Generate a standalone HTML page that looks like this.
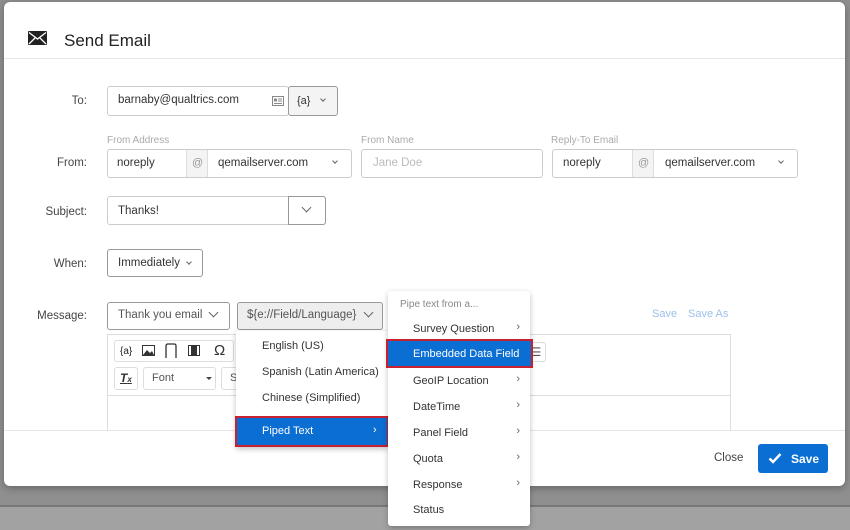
<!DOCTYPE html>
<html><head><meta charset="utf-8"><style>
*{box-sizing:border-box;margin:0;padding:0}
body{width:850px;height:530px;background:#8f8f8f;font-family:"Liberation Sans",sans-serif;position:relative;overflow:hidden;color:#333;font-size:12px}
.a{position:absolute}
.box{position:absolute;border:1px solid #ccc;border-radius:3px;background:#fff}
.lbl{position:absolute;font-size:11.5px;color:#444;text-align:right;width:80px}
.t{position:absolute;font-size:11.5px;color:#333;white-space:nowrap}
.sm{position:absolute;font-size:10px;color:#aaa}
.chev{position:absolute;width:7px;height:7px;border-right:1.3px solid #666;border-bottom:1.3px solid #666;transform:rotate(45deg)}
.mi{position:absolute;left:25px;font-size:11px;color:#333}
.ar{position:absolute;right:10px;font-size:11px;color:#666}
</style></head><body>
<div class="a" style="left:0;top:505px;width:850px;height:2px;background:#777"></div>
<div class="a" style="left:0;top:507px;width:850px;height:23px;background:#a2a2a2"></div>
<div class="a" style="left:4px;top:2px;width:841px;height:484px;background:#fff;border-radius:6px;box-shadow:0 2px 8px rgba(0,0,0,.3)"></div>
<div class="a" style="left:4px;top:58px;width:841px;height:1px;background:#e6e6e6"></div>
<div class="a" style="left:4px;top:430px;width:841px;height:1px;background:#e6e6e6"></div>
<svg class="a" style="left:28px;top:31px" width="19" height="14" viewBox="0 0 19 14"><rect width="19" height="14" rx="1" fill="#222"/><path d="M1 1.5L9.5 8L18 1.5M1 13L7 7M18 13L12 7" stroke="#fff" stroke-width="1.3" fill="none"/></svg>
<div class="t" style="left:64px;top:31px;font-size:17px;color:#222">Send Email</div>

<div class="lbl" style="left:7px;top:95px">To:</div>
<div class="box" style="left:107px;top:86px;width:182px;height:30px"></div>
<div class="t" style="left:118px;top:94px">barnaby@qualtrics.com</div>
<svg class="a" style="left:272px;top:96px" width="12" height="10"><rect x=".5" y=".5" width="11" height="9" fill="none" stroke="#888"/><rect x="2" y="2.5" width="3" height="3" fill="#888"/><path d="M6 3h4M6 5h4M2 7.5h8" stroke="#888"/></svg>
<div class="box" style="left:288px;top:86px;width:50px;height:30px;border-color:#999;background:#f4f4f4"></div>
<div class="t" style="left:297px;top:95px;font-size:11px">{a}</div>
<div class="chev" style="left:321px;top:97px;width:4px;height:4px"></div>

<div class="sm" style="left:107px;top:135px">From Address</div>
<div class="sm" style="left:361px;top:135px">From Name</div>
<div class="sm" style="left:551px;top:135px">Reply-To Email</div>
<div class="lbl" style="left:7px;top:157px">From:</div>
<div class="box" style="left:107px;top:149px;width:245px;height:29px"></div>
<div class="a" style="left:186px;top:150px;width:22px;height:27px;background:#f4f4f4;border-left:1px solid #ddd;border-right:1px solid #ddd"></div>
<div class="t" style="left:117px;top:157px">noreply</div>
<div class="t" style="left:192px;top:157px;color:#999;font-size:11px">@</div>
<div class="t" style="left:218px;top:157px">qemailserver.com</div>
<div class="chev" style="left:333px;top:159px;width:4px;height:4px"></div>
<div class="box" style="left:361px;top:149px;width:182px;height:29px"></div>
<div class="t" style="left:373px;top:157px;color:#bbb">Jane Doe</div>
<div class="box" style="left:552px;top:149px;width:246px;height:29px"></div>
<div class="a" style="left:632px;top:150px;width:22px;height:27px;background:#f4f4f4;border-left:1px solid #ddd;border-right:1px solid #ddd"></div>
<div class="t" style="left:563px;top:157px">noreply</div>
<div class="t" style="left:638px;top:157px;color:#999;font-size:11px">@</div>
<div class="t" style="left:665px;top:157px">qemailserver.com</div>
<div class="chev" style="left:779px;top:159px;width:4px;height:4px"></div>

<div class="lbl" style="left:7px;top:206px">Subject:</div>
<div class="box" style="left:107px;top:196px;width:219px;height:29px"></div>
<div class="a" style="left:288px;top:196px;width:38px;height:29px;border:1px solid #999;border-radius:0 3px 3px 0"></div>
<div class="t" style="left:118px;top:205px">Thanks!</div>
<div class="chev" style="left:303px;top:204px"></div>

<div class="lbl" style="left:7px;top:258px">When:</div>
<div class="box" style="left:107px;top:249px;width:96px;height:28px;border-color:#999"></div>
<div class="t" style="left:118px;top:257px">Immediately</div>
<div class="chev" style="left:187px;top:260px;width:4px;height:4px"></div>

<div class="lbl" style="left:7px;top:310px">Message:</div>
<div class="box" style="left:107px;top:302px;width:123px;height:28px;border-color:#999"></div>
<div class="t" style="left:118px;top:309px;color:#555">Thank you email</div>
<div class="chev" style="left:210px;top:309px"></div>
<div class="box" style="left:237px;top:302px;width:146px;height:28px;border-color:#999;background:#eee"></div>
<div class="t" style="left:247px;top:309px;color:#555">${e://Field/Language}</div>
<div class="chev" style="left:365px;top:309px"></div>
<div class="t" style="left:652px;top:308px;color:#9cc0ea;font-size:11px">Save</div>
<div class="t" style="left:688px;top:308px;color:#9cc0ea;font-size:11px">Save As</div>

<div class="a" style="left:107px;top:334px;width:624px;height:97px;border:1px solid #ddd;border-bottom:none"></div>
<div class="a" style="left:108px;top:395px;width:622px;height:1px;background:#ddd"></div>
<div class="box" style="left:114px;top:340px;width:120px;height:22px;border-color:#ddd"></div>
<div class="t" style="left:120px;top:346px;font-size:10px;color:#222">{a}</div>
<svg class="a" style="left:142px;top:345px" width="13" height="11"><rect x=".5" y=".5" width="12" height="10" fill="none" stroke="#333"/><path d="M1 10L5 5L8 8L10 6L12 10Z" fill="#333"/></svg>
<svg class="a" style="left:165px;top:343px" width="12" height="15"><path d="M1 15V3Q1 1 3 1H9Q11 1 11 3V15" fill="none" stroke="#333" stroke-width="1.3"/></svg>
<svg class="a" style="left:188px;top:345px" width="12" height="11"><rect x=".5" y=".5" width="11" height="10" fill="none" stroke="#333"/><rect x="3" y="1" width="6" height="9" fill="#333"/></svg>
<div class="t" style="left:214px;top:342px;font-size:15px;color:#333">Ω</div>
<div class="box" style="left:114px;top:367px;width:24px;height:23px;border-color:#ddd"></div>
<div class="t" style="left:120px;top:371px;font-size:12px;font-style:italic;font-weight:bold;text-decoration:underline;color:#333">T<span style="font-size:8px">x</span></div>
<div class="box" style="left:143px;top:367px;width:73px;height:23px;border-color:#ddd"></div>
<div class="t" style="left:152px;top:372px;font-size:11px;color:#555">Font</div>
<div class="a" style="left:206px;top:377px;border:3px solid transparent;border-top-color:#444"></div>
<div class="box" style="left:221px;top:367px;width:20px;height:23px;border-color:#ddd"></div>
<div class="t" style="left:230px;top:372px;font-size:11px;color:#555">S</div>
<div class="box" style="left:528px;top:342px;width:18px;height:20px;border-color:#ddd"></div>
<div class="t" style="left:531px;top:345px;color:#555">☰</div>

<div class="t" style="left:714px;top:452px;color:#444">Close</div>
<div class="a" style="left:758px;top:444px;width:70px;height:29px;background:#0b6ed2;border-radius:3px"></div>
<svg class="a" style="left:768px;top:452px" width="14" height="12"><path d="M1.5 6.5L5 10L12.5 2" stroke="#fff" stroke-width="2.5" fill="none"/></svg>
<div class="t" style="left:791px;top:452px;color:#fff;font-weight:bold;font-size:12px">Save</div>

<div class="a" style="left:236px;top:331px;width:153px;height:116px;background:#fff;box-shadow:0 2px 6px rgba(0,0,0,.25);border-radius:2px"></div>
<div class="t" style="left:262px;top:340px;font-size:11px">English (US)</div>
<div class="t" style="left:262px;top:366px;font-size:11px">Spanish (Latin America)</div>
<div class="t" style="left:262px;top:392px;font-size:11px">Chinese (Simplified)</div>
<div class="a" style="left:235px;top:416px;width:154px;height:31px;background:#0b6ed2;border:2px solid #c8202f"></div>
<div class="t" style="left:262px;top:425px;font-size:11px;color:#fff">Piped Text</div>
<div class="t" style="left:373px;top:424px;font-size:11px;color:#fff">›</div>

<div class="a" style="left:388px;top:291px;width:142px;height:235px;background:#fff;box-shadow:0 2px 6px rgba(0,0,0,.25);border-radius:3px">
<div class="a" style="left:12px;top:8px;font-size:10px;color:#888">Pipe text from a...</div>
<div class="mi" style="top:32px">Survey Question</div><div class="ar" style="top:30px">›</div>
<div class="mi" style="top:84px">GeoIP Location</div><div class="ar" style="top:82px">›</div>
<div class="mi" style="top:110px">DateTime</div><div class="ar" style="top:108px">›</div>
<div class="mi" style="top:136px">Panel Field</div><div class="ar" style="top:134px">›</div>
<div class="mi" style="top:162px">Quota</div><div class="ar" style="top:160px">›</div>
<div class="mi" style="top:188px">Response</div><div class="ar" style="top:186px">›</div>
<div class="mi" style="top:213px">Status</div>
</div>
<div class="a" style="left:386px;top:339px;width:147px;height:29px;background:#0b6ed2;border:2px solid #c8202f"></div>
<div class="t" style="left:413px;top:348px;font-size:11px;color:#fff">Embedded Data Field</div>
</body></html>
